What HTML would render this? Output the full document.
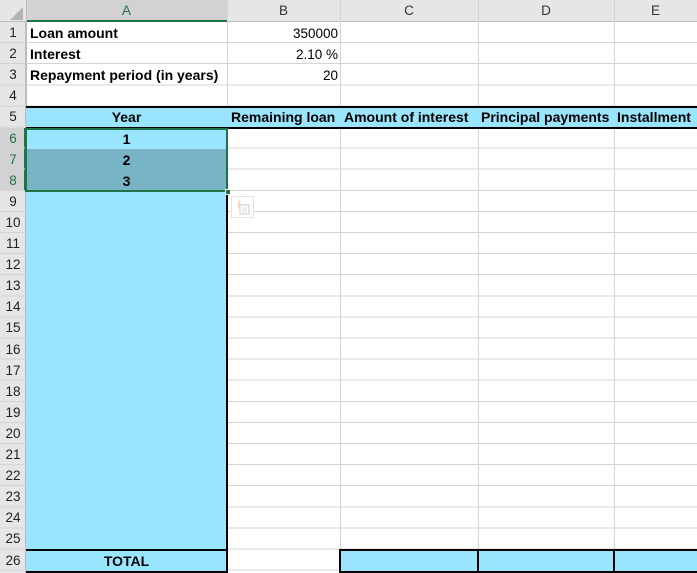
<!DOCTYPE html>
<html><head><meta charset="utf-8"><style>
*{margin:0;padding:0;box-sizing:border-box}
body{width:697px;height:573px;overflow:hidden;background:#fff;position:relative;font-family:"Liberation Sans",Arial,sans-serif;font-size:13.5px;color:#000}
.a{position:absolute}
.grid{left:0;top:22px;width:697px;height:551px;background:repeating-linear-gradient(to bottom,transparent 0 20.1px,#d4d4d4 20.1px 21.1px)}
.v{position:absolute;top:0;width:1px;height:573px;background:#d4d4d4}
.rh{position:absolute;left:0;width:26px;text-align:center;font-size:13.5px;color:#222;line-height:21px}
.t{position:absolute;line-height:21px;font-weight:bold;white-space:nowrap;font-size:14px}
.blk{position:absolute;background:#000}
</style></head><body>
<div class="a" style="left:0;top:0;width:697px;height:22px;background:#e6e6e6;border-bottom:1px solid #bcbcbc"></div>
<div class="a" style="left:26px;top:0;width:201px;height:22px;background:#d2d2d2;border-bottom:2px solid #217346"></div>
<svg class="a" style="left:8px;top:5px" width="16" height="16"><polygon points="15,2 15,15 2,15" fill="#b4b4b4"/></svg>
<div class="a" style="left:0;top:22px;width:26px;height:551px;background:#e6e6e6;border-right:1px solid #bcbcbc"></div>
<div class="a" style="left:0;top:127.5px;width:26px;height:63.3px;background:#d2d2d2;border-right:2px solid #217346"></div>
<div class="grid a"></div>
<div class="v" style="left:26px;background:#bcbcbc"></div>
<div class="v" style="left:227px"></div>
<div class="v" style="left:340px"></div>
<div class="v" style="left:478px"></div>
<div class="v" style="left:614px"></div>
<div class="a" style="left:26px;top:0;width:201px;line-height:22px;text-align:center;color:#217346">A</div>
<div class="a" style="left:227px;top:0;width:113px;line-height:22px;text-align:center;color:#333">B</div>
<div class="a" style="left:340px;top:0;width:138px;line-height:22px;text-align:center;color:#333">C</div>
<div class="a" style="left:478px;top:0;width:136px;line-height:22px;text-align:center;color:#333">D</div>
<div class="a" style="left:614px;top:0;width:83px;line-height:22px;text-align:center;color:#333">E</div>
<div class="a" style="left:26px;top:107px;width:671px;height:21px;background:#99e5fd"></div>
<div class="a" style="left:26px;top:128px;width:201px;height:444px;background:#99e5fd"></div>
<div class="a" style="left:27px;top:149px;width:199px;height:42px;background:#79b4c6"></div>
<div class="a" style="left:340px;top:550px;width:357px;height:22px;background:#99e5fd"></div>
<div class="rh" style="top:22px">1</div><div class="rh" style="top:43.1px">2</div><div class="rh" style="top:64.2px">3</div><div class="rh" style="top:85.3px">4</div><div class="rh" style="top:106.4px">5</div>
<div class="rh" style="top:127.5px;color:#217346">6</div><div class="rh" style="top:148.6px;color:#217346">7</div><div class="rh" style="top:169.7px;color:#217346">8</div>
<div class="rh" style="top:190.8px">9</div><div class="rh" style="top:211.9px">10</div><div class="rh" style="top:233px">11</div><div class="rh" style="top:254.1px">12</div><div class="rh" style="top:275.2px">13</div><div class="rh" style="top:296.3px">14</div><div class="rh" style="top:317.4px">15</div><div class="rh" style="top:338.5px">16</div><div class="rh" style="top:359.6px">17</div><div class="rh" style="top:380.7px">18</div><div class="rh" style="top:401.8px">19</div><div class="rh" style="top:422.9px">20</div><div class="rh" style="top:444px">21</div><div class="rh" style="top:465.1px">22</div><div class="rh" style="top:486.2px">23</div><div class="rh" style="top:507.3px">24</div><div class="rh" style="top:528.4px">25</div><div class="rh" style="top:549.5px">26</div>
<div class="t" style="left:30px;top:23px">Loan amount</div>
<div class="t" style="left:30px;top:44px">Interest</div>
<div class="t" style="left:30px;top:65px">Repayment period (in years)</div>
<div class="a" style="left:227px;top:23px;width:111px;text-align:right;line-height:21px">350000</div>
<div class="a" style="left:227px;top:44px;width:111px;text-align:right;line-height:21px">2.10 %</div>
<div class="a" style="left:227px;top:65px;width:111px;text-align:right;line-height:21px">20</div>
<div class="t" style="left:26px;top:107px;width:201px;text-align:center">Year</div>
<div class="t" style="left:231px;top:107px">Remaining loan</div>
<div class="t" style="left:344px;top:107px">Amount of interest</div>
<div class="t" style="left:481px;top:107px">Principal payments</div>
<div class="t" style="left:617px;top:107px">Installment</div>
<div class="t" style="left:26px;top:129px;width:201px;text-align:center">1</div>
<div class="t" style="left:26px;top:150px;width:201px;text-align:center">2</div>
<div class="t" style="left:26px;top:171px;width:201px;text-align:center">3</div>
<div class="t" style="left:26px;top:551px;width:201px;text-align:center">TOTAL</div>
<div class="blk" style="left:26px;top:106px;width:671px;height:2px"></div>
<div class="blk" style="left:26px;top:127px;width:671px;height:2px"></div>
<div class="blk" style="left:226px;top:128px;width:2px;height:445px"></div>
<div class="blk" style="left:26px;top:549px;width:201px;height:2px"></div>
<div class="blk" style="left:26px;top:571px;width:201px;height:2px"></div>
<div class="blk" style="left:339px;top:549px;width:358px;height:2px"></div>
<div class="blk" style="left:339px;top:571px;width:358px;height:2px"></div>
<div class="blk" style="left:339px;top:549px;width:2px;height:24px"></div>
<div class="blk" style="left:477px;top:549px;width:2px;height:24px"></div>
<div class="blk" style="left:613px;top:549px;width:2px;height:24px"></div>
<div class="a" style="left:25px;top:128px;width:203px;height:64px;border:2px solid #217346"></div>
<div class="a" style="left:225px;top:189px;width:6px;height:6px;background:#217346;border:1px solid #fff"></div>
<div class="a" style="left:231px;top:196px;width:23px;height:22px;border:1px solid #e2e2e2;background:#fff"></div>
<svg class="a" style="left:235px;top:199px" width="16" height="16"><path d="M5 1 L3 5 L5 5 L3 9" stroke="#f4c9a0" fill="none"/><rect x="5" y="6" width="9" height="9" fill="none" stroke="#ccc"/><path d="M7 9h5M7 11h5M7 13h5" stroke="#ddd"/></svg>
</body></html>
